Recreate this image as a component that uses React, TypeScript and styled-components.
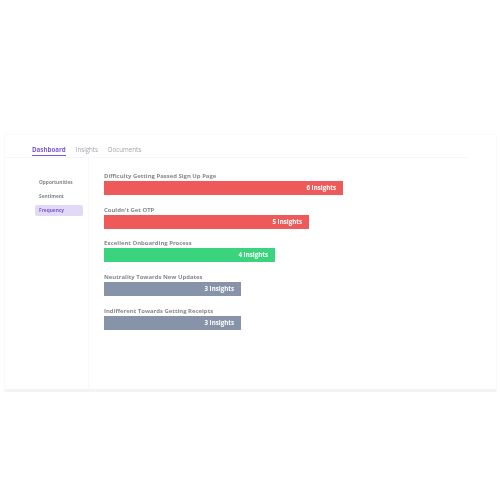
import { FunctionComponent } from "react";
import styled, { createGlobalStyle } from "styled-components";

const GlobalStyle = createGlobalStyle`
  html, body {
    margin: 0;
    padding: 0;
    background: #ffffff;
    font-family: "Open Sans", "Liberation Sans", sans-serif;
  }
`;

const TABS = ["Dashboard", "Insights", "Documents"];
const MENU = ["Opportunities", "Sentiment", "Frequency"];

const BAR_COLORS = {
  red: "#ee5a5a",
  green: "#3bd47e",
  gray: "#8793a8",
};

const ROWS: { title: string; label: string; width: number; tone: keyof typeof BAR_COLORS }[] = [
  { title: "Difficulty Getting Passed Sign Up Page", label: "6 Insights", width: 239, tone: "red" },
  { title: "Couldn't Get OTP", label: "5 Insights", width: 205, tone: "red" },
  { title: "Excellent Onboarding Process", label: "4 Insights", width: 171, tone: "green" },
  { title: "Neutrality Towards New Updates", label: "3 Insights", width: 137, tone: "gray" },
  { title: "Indifferent Towards Getting Receipts", label: "3 Insights", width: 137, tone: "gray" },
];

const App: FunctionComponent = () => {
  return (
    <Page>
      <GlobalStyle />
      <Card>
        <TabBar>
          {TABS.map((tab, index) => (
            <Tab key={tab} active={index === 0}>
              {tab}
            </Tab>
          ))}
        </TabBar>
        <Body>
          <Side>
            {MENU.map((item) => (
              <SideItem key={item} active={item === "Frequency"}>
                {item}
              </SideItem>
            ))}
          </Side>
          <Main>
            {ROWS.map((row) => (
              <Row key={row.title}>
                <RowTitle>{row.title}</RowTitle>
                <Bar tone={row.tone} style={{ width: row.width }}>
                  {row.label}
                </Bar>
              </Row>
            ))}
          </Main>
        </Body>
      </Card>
    </Page>
  );
};

const Page = styled.div`
  width: 500px;
  height: 500px;
  padding: 134px 3px 0 4px;
  box-sizing: border-box;
  overflow: hidden;
`;

const Card = styled.div`
  height: 258px;
  display: flex;
  flex-direction: column;
  background: #ffffff;
  border-top: 1px solid #fafafb;
  border-left: 1px solid #f9f9fa;
  border-right: 1px solid #f9f9fa;
  border-bottom: 3px solid #f3f3f4;
  box-sizing: border-box;
  filter: blur(0.35px);
`;

const TabBar = styled.div`
  display: flex;
  align-items: flex-start;
  gap: 10px;
  width: 463px;
  height: 23px;
  padding: 10px 0 0 27px;
  box-sizing: border-box;
  border-bottom: 1px solid #f7f7f9;
`;

const Tab = styled.div<{ active?: boolean }>`
  height: 10px;
  font-size: 6.2px;
  line-height: 9px;
  font-weight: ${(props) => (props.active ? 700 : 400)};
  color: ${(props) => (props.active ? "#7a55d8" : "#a3a6ad")};
  border-bottom: ${(props) => (props.active ? "1px solid #7a55d8" : "none")};
`;

const Body = styled.div`
  flex: 1;
  display: flex;
`;

const Side = styled.div`
  width: 84px;
  padding: 19px 0 0 30px;
  box-sizing: border-box;
  border-right: 1px solid #f8f8fa;
  display: flex;
  flex-direction: column;
  gap: 3px;
`;

const SideItem = styled.div<{ active?: boolean }>`
  width: 48px;
  height: 11px;
  padding-left: 4px;
  box-sizing: border-box;
  border-radius: 2px;
  font-size: 4.8px;
  line-height: 11px;
  font-weight: 700;
  color: ${(props) => (props.active ? "#7a55d8" : "#83868d")};
  background: ${(props) => (props.active ? "#e2d9f7" : "transparent")};
`;

const Main = styled.div`
  flex: 1;
  padding: 14px 0 0 15px;
  display: flex;
  flex-direction: column;
  gap: 10.7px;
`;

const Row = styled.div`
  display: flex;
  flex-direction: column;
`;

const RowTitle = styled.div`
  font-size: 5.95px;
  line-height: 9px;
  font-weight: 700;
  color: #85888f;
  white-space: nowrap;
`;

const Bar = styled.div<{ tone: keyof typeof BAR_COLORS }>`
  height: 14px;
  padding-right: 7px;
  box-sizing: border-box;
  background: ${(props) => BAR_COLORS[props.tone]};
  color: #ffffff;
  font-size: 6.2px;
  font-weight: 700;
  line-height: 14px;
  text-align: right;
`;

export default App;
